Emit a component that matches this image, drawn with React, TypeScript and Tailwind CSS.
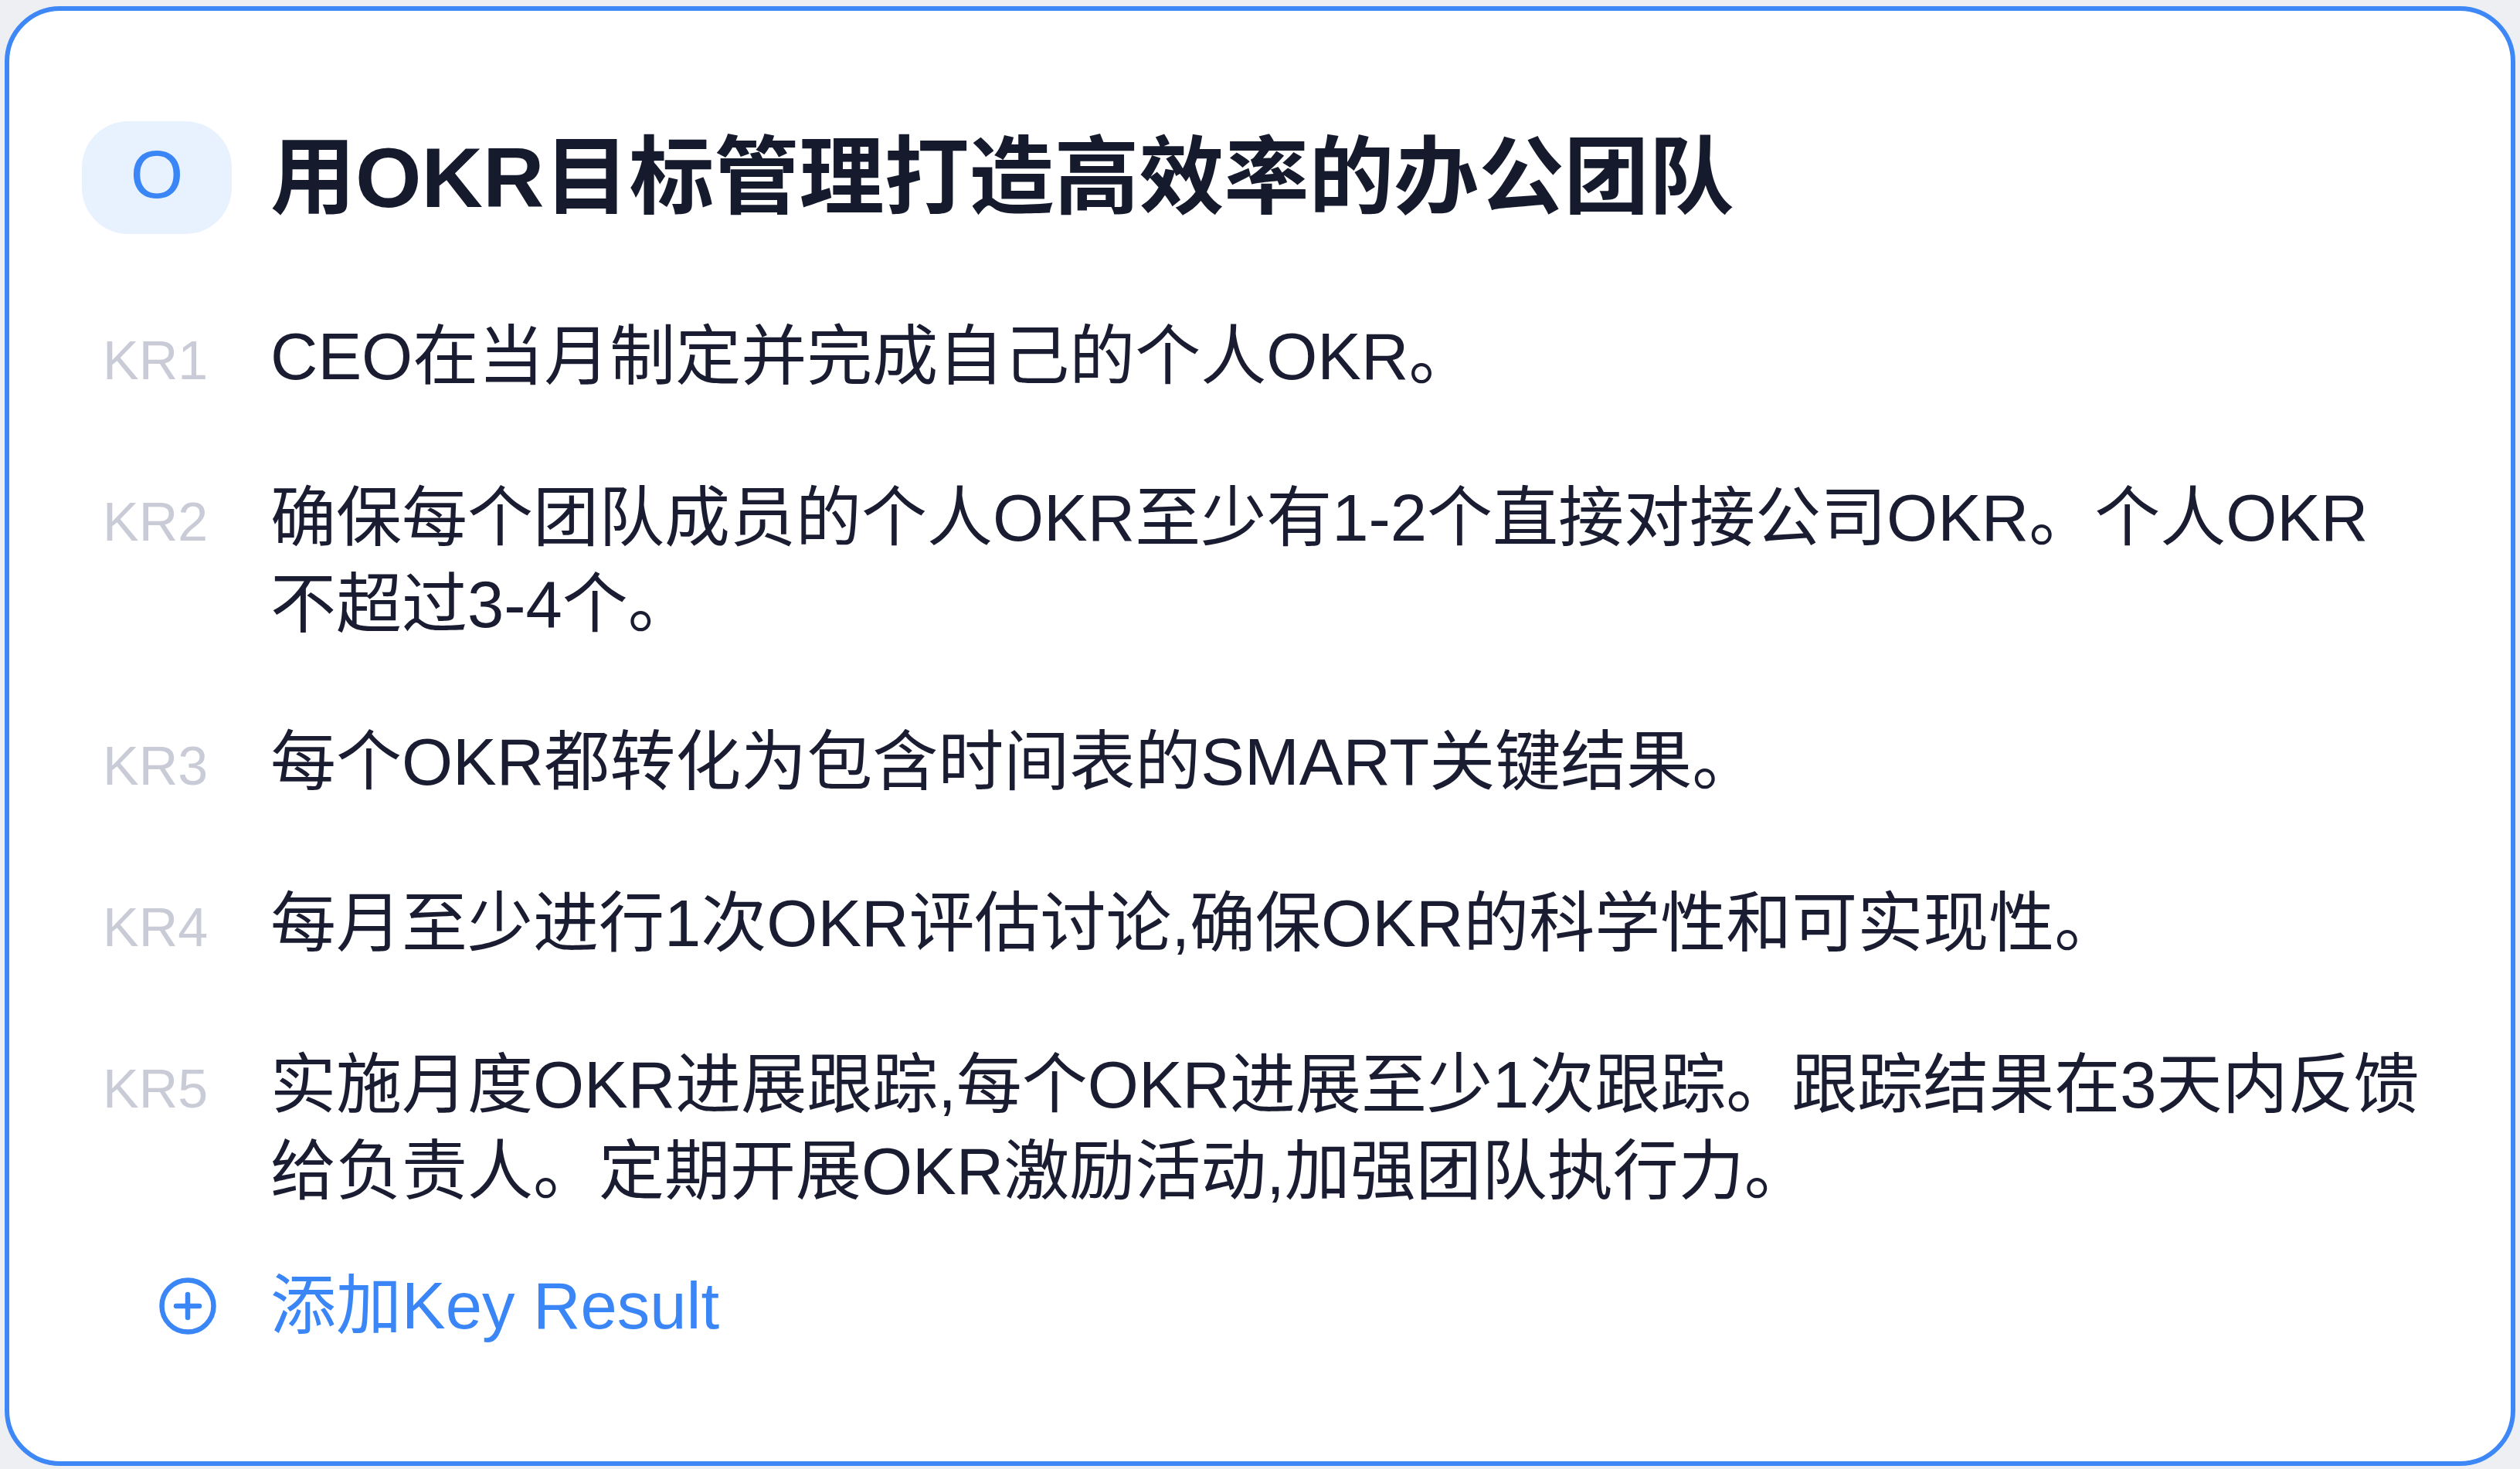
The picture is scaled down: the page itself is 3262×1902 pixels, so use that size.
import React from "react";

const FONT = '"Liberation Sans", "Noto Sans CJK SC", sans-serif';

type KR = { label: string; lines: string[] };

const krs: KR[] = [
  { label: "KR1", lines: ["CEO在当月制定并完成自己的个人OKR。"] },
  {
    label: "KR2",
    lines: ["确保每个团队成员的个人OKR至少有1-2个直接对接公司OKR。个人OKR", "不超过3-4个。"],
  },
  { label: "KR3", lines: ["每个OKR都转化为包含时间表的SMART关键结果。"] },
  { label: "KR4", lines: ["每月至少进行1次OKR评估讨论,确保OKR的科学性和可实现性。"] },
  {
    label: "KR5",
    lines: [
      "实施月度OKR进展跟踪,每个OKR进展至少1次跟踪。跟踪结果在3天内反馈",
      "给负责人。定期开展OKR激励活动,加强团队执行力。",
    ],
  },
];

function PlusCircle() {
  return (
    <svg width="74" height="74" viewBox="0 0 74 74" fill="none">
      <circle cx="37" cy="37" r="33.5" stroke="#3a86f6" strokeWidth="6.5" />
      <path d="M37 22v30M22 37h30" stroke="#3a86f6" strokeWidth="6.5" strokeLinecap="round" />
    </svg>
  );
}

export default function App() {
  return (
    <div
      className="w-[3262px] h-[1902px] bg-[#edeff3] pt-[8px] pl-[6px] overflow-hidden"
      style={{ fontFamily: FONT }}
    >
      <div className="w-[3250px] h-[1890px] bg-white border-[6px] border-[#3d88f6] rounded-[72px] pl-[94px] pt-[143px]">
        {/* Objective header */}
        <div className="flex items-center gap-[50px] h-[146px]">
          <div className="w-[194px] h-[146px] rounded-[60px] bg-[#e8f2fe] flex items-center justify-center">
            <span className="text-[88px] leading-none text-[#3a86f6] -mt-[8px]">O</span>
          </div>
          <div className="text-[110px] leading-none font-bold text-[#161a2d] whitespace-nowrap">
            用OKR目标管理打造高效率的办公团队
          </div>
        </div>

        {/* Key results */}
        <div className="mt-[103px] flex flex-col gap-[92px]">
          {krs.map((kr) => (
            <div key={kr.label} className="flex items-baseline">
              <div className="w-[244px] shrink-0 pl-[27px] text-[70px] leading-[112px] text-[#c9ccd6]">
                {kr.label}
              </div>
              <div className="text-[85px] leading-[112px] text-[#1a1d31] whitespace-nowrap">
                {kr.lines.map((l, i) => (
                  <div key={i}>{l}</div>
                ))}
              </div>
            </div>
          ))}
        </div>

        {/* Add key result */}
        <div className="mt-[62px] flex items-center h-[112px]">
          <div className="w-[244px] shrink-0 pl-[100px] flex items-center">
            <PlusCircle />
          </div>
          <div className="text-[85px] leading-[112px] text-[#3a86f6] whitespace-nowrap">添加Key Result</div>
        </div>
      </div>
    </div>
  );
}
